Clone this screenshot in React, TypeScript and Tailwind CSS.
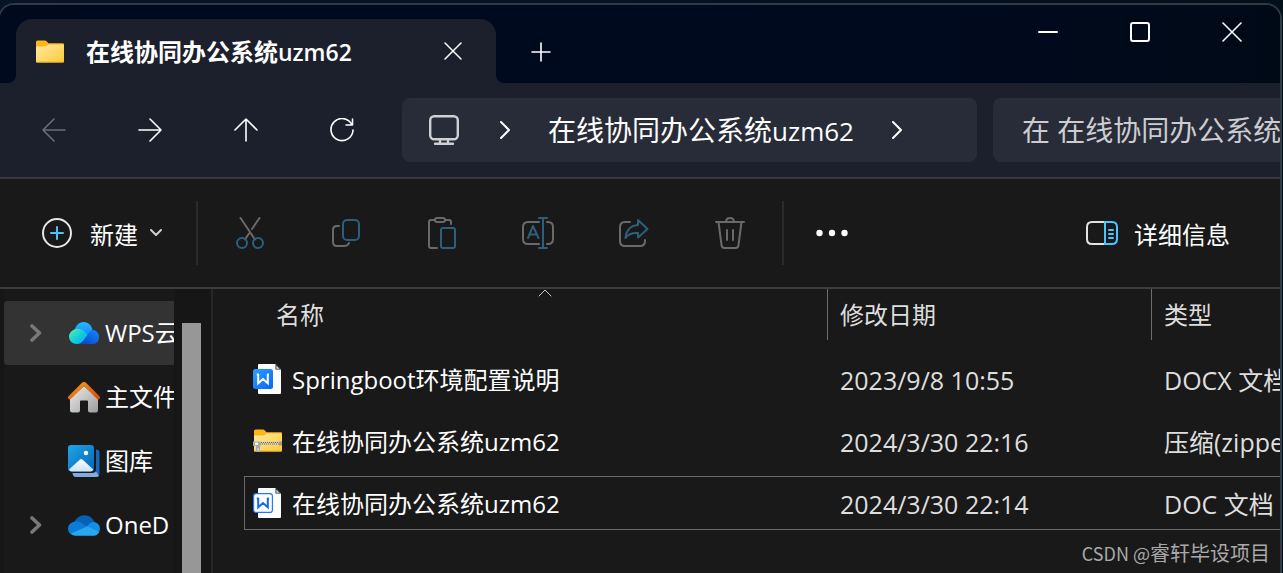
import type { ReactNode } from "react";

type Draw = { d?: string; w: number; h: number; className?: string; children?: ReactNode; sw?: number };

function Icon({ d, w, h, className = "", children, sw = 2 }: Draw) {
  return (
    <svg
      width={w}
      height={h}
      viewBox={`0 0 ${w} ${h}`}
      fill="none"
      stroke="currentColor"
      strokeWidth={sw}
      strokeLinecap="round"
      strokeLinejoin="round"
      aria-hidden="true"
      className={`block shrink-0 ${className}`}
    >
      {d ? <path d={d} /> : children}
    </svg>
  );
}

const GREY = "#6a6a6a";
const TEAL = "#2c5f7c";

function FolderIcon() {
  return (
    <svg width="28" height="23" viewBox="0 0 28 23" className="block shrink-0" aria-hidden="true">
      <defs>
        <linearGradient id="folder" x1="0" y1="0" x2="1" y2="1">
          <stop offset="0" stopColor="#ffe9a2" />
          <stop offset="1" stopColor="#ffc937" />
        </linearGradient>
      </defs>
      <path d="M0 2Q0 .5 1.500 .5H9Q10 .5 10.600 1.200L12.500 3.200H26.500Q28 3.200 28 4.500V12H0Z" fill="#fcb61a" />
      <path d="M0 7.200Q0 6.500 .9 6.500H9.500Q10.300 6.500 11 5.800L12.400 4.500H28V21.500Q28 22.500 27 22.500H1Q0 22.500 0 21.500Z" fill="url(#folder)" />
      <path d="M.5 22.200H27.500" stroke="#e0a020" strokeWidth="1" />
    </svg>
  );
}

function ZipIcon() {
  return (
    <svg width="30" height="24" viewBox="0 0 30 24" className="block shrink-0" aria-hidden="true">
      <path d="M1 2Q1 .5 2.500 .5H10Q11 .5 11.600 1.200L13.500 3.200H28Q29 3.200 29 4.500V12H1Z" fill="#fcb61a" />
      <path d="M1 6.500H10.500Q11.300 6.500 12 5.800L13.400 4.500H29V21.500Q29 22.500 28 22.500H2Q1 22.500 1 21.500Z" fill="url(#folder)" />
      <path d="M1 22.200H28.500" stroke="#e0a020" strokeWidth="1" />
      <rect x="7" y="12.500" width="22" height="3.500" fill="#d8d0b4" />
      <path d="M8 13.500H26" stroke="#6f6653" strokeWidth="1" strokeDasharray="1 1" />
      <path d="M7 15H26" stroke="#6f6653" strokeWidth="1" strokeDasharray="1 1" />
      <rect x="26" y="12.500" width="3" height="4" fill="#9a9a9a" />
      <path d="M0 12.500H7.500V17H7V23H3V17H0Z" fill="#a9a9a9" />
      <path d="M2 13.500H5V16H2ZM4.500 19.500H5.800V21.500H4.500Z" fill="#f1f1f1" />
    </svg>
  );
}

function DocIcon({ filled }: { filled: boolean }) {
  return (
    <svg width="30" height="32" viewBox="0 0 30 32" className="block shrink-0" aria-hidden="true">
      <defs>
        <linearGradient id="wps" x1="0" y1="0" x2="1" y2="1">
          <stop offset="0" stopColor="#2aa2ff" />
          <stop offset="1" stopColor="#0a66f7" />
        </linearGradient>
      </defs>
      <path d="M5 2Q5 1 6 1H22.500L28 6.500V30Q28 31 27 31H6Q5 31 5 30Z" fill="#fdfdff" />
      <path d="M22.500 1V6.500H28Z" fill="#20242c" />
      <path d="M23.400 2.800V5.800H26.500Z" fill="#e9ebf2" />
      {filled ? (
        <rect x="0" y="6" width="20" height="20" rx="2.500" fill="url(#wps)" />
      ) : (
        <rect x=".6" y="6.600" width="18.800" height="18.800" rx="2.500" fill="#fff" stroke="#2277f5" strokeWidth="1.200" />
      )}
      <path
        d="M5.200 11V20.300L10 16L14.800 20.300V11M3.800 11.500H5.800M14.200 11.500H16"
        fill="none"
        stroke={filled ? "#fff" : "#1268ef"}
        strokeWidth="2"
      />
    </svg>
  );
}

function WpsCloudIcon() {
  return (
    <svg width="30" height="22" viewBox="0 0 30 22" className="block" aria-hidden="true">
      <defs>
        <linearGradient id="cloudA" x1="0" y1="0" x2="1" y2="1">
          <stop offset="0" stopColor="#5df0b0" />
          <stop offset=".5" stopColor="#12d0d8" />
          <stop offset="1" stopColor="#0aa0ff" />
        </linearGradient>
        <linearGradient id="cloudB" x1="0" y1="0" x2="0" y2="1">
          <stop offset="0" stopColor="#28b8ff" />
          <stop offset="1" stopColor="#1488ff" />
        </linearGradient>
        <linearGradient id="cloudC" x1="1" y1="0" x2="0" y2="1">
          <stop offset="0" stopColor="#1687ff" />
          <stop offset="1" stopColor="#063fc4" />
        </linearGradient>
      </defs>
      <path d="M5 10C6 4 10 0 14.500 0C19 0 22.500 3 23.500 8L18 14H8Z" fill="url(#cloudB)" />
      <path d="M12 21L20 10.500C22 8 24 7.700 25.500 8.200C28 9 30 11.500 30 15C30 19 27.500 22 24 22H10Z" fill="url(#cloudC)" />
      <path d="M7.500 7C11 6 14.500 8 18.500 13L13.500 19.500Q11.500 22 8 22C3.500 22 0 19 0 14.500C0 11 3 7.500 7.500 7Z" fill="url(#cloudA)" />
    </svg>
  );
}

function HomeIcon() {
  return (
    <svg width="32" height="31" viewBox="0 0 32 31" className="block" aria-hidden="true">
      <defs>
        <linearGradient id="wall" x1="0" y1="0" x2="1" y2="1">
          <stop offset="0" stopColor="#ededed" />
          <stop offset="1" stopColor="#9c9c9c" />
        </linearGradient>
        <linearGradient id="roof" x1="0" y1="0" x2="1" y2="1">
          <stop offset="0" stopColor="#fb9a17" />
          <stop offset="1" stopColor="#d94a08" />
        </linearGradient>
      </defs>
      <path d="M16 4L30 17V28Q30 30.500 28 30.500H22Q20 30.500 20 28.500V19.500Q20 18.500 19 18.500H13Q12 18.500 12 19.500V28.500Q12 30.500 10 30.500H4.500Q2 30.500 2 28V17Z" fill="url(#wall)" />
      <path d="M1.800 15.500L14.500 2.700Q16 1.300 17.500 2.700L30.200 15.500" fill="none" stroke="url(#roof)" strokeWidth="3.600" strokeLinecap="round" />
    </svg>
  );
}

function GalleryIcon() {
  return (
    <svg width="32" height="32" viewBox="0 0 32 32" className="block" aria-hidden="true">
      <defs>
        <linearGradient id="sky" x1="0" y1="0" x2="1" y2="1">
          <stop offset="0" stopColor="#1fa5ea" />
          <stop offset="1" stopColor="#0566b4" />
        </linearGradient>
        <linearGradient id="hill" x1="0" y1="0" x2="0" y2="1">
          <stop offset="0" stopColor="#ffffff" />
          <stop offset="1" stopColor="#c9e4fb" />
        </linearGradient>
      </defs>
      <path d="M28 4.500Q31.500 4.500 31.500 7.500V28Q31.500 32 27.500 32H8Q5 32 4.500 28H24Q28 28 28 24Z" fill="#1668b4" />
      <path d="M4.500 28H24Q27 28 28 26.500L31 31Q29.500 32 27.500 32H8Q5 32 4.500 28Z" fill="#82abdf" />
      <rect x="0" y="0" width="26" height="26.500" rx="3" fill="url(#sky)" />
      <path d="M1 24.500L12 14.600Q13.200 13.600 14.400 14.600L25.300 24.500Q24.500 26.500 22.500 26.500H3.500Q2 26.500 1 24.500Z" fill="url(#hill)" />
      <circle cx="18" cy="8" r="2.200" fill="#fff" />
    </svg>
  );
}

function OneDriveIcon() {
  return (
    <svg width="32" height="21" viewBox="0 0 32 21" className="block" aria-hidden="true">
      <path d="M6 7.500C8 3 12 .2 16.500 .2C21 .2 25 3 26.500 7.200L19 12L10 9Z" fill="#0660b5" />
      <path d="M8.500 6.500C11 6.500 13 7.500 14.500 8.500L20 12L4.500 20C1.500 19 0 16.500 0 13.800C0 9.500 3.500 6.500 8.500 6.500Z" fill="#0a7bd6" />
      <path d="M19 11.500C21 8.500 23.500 7 26 7.100C29.500 7.500 32 10.500 32 13.800Q32 15.500 31 17.500L19 12Z" fill="#128ee4" />
      <path d="M3 18.500L19.500 11.300L31.300 17Q29.500 20.700 25.500 20.700H7.500Q4.700 20.700 3 18.500Z" fill="#28a6ee" />
    </svg>
  );
}

const tools: { label: string; icon: ReactNode }[] = [
  {
    label: "剪切",
    icon: (
      <Icon w={28} h={32}>
        <path d="M4.500 1L19 22.500M23.500 1L16 12M13 16.500L9 22.500" stroke={GREY} />
        <circle cx="6" cy="26" r="5" stroke={TEAL} />
        <circle cx="22" cy="26" r="5" stroke={TEAL} />
      </Icon>
    ),
  },
  {
    label: "复制",
    icon: (
      <Icon w={28} h={28}>
        <path d="M7 7H5Q1 7 1 11V23Q1 27 5 27H12Q16 27 17 24" stroke={GREY} />
        <rect x="11" y="1" width="16" height="20" rx="4" stroke={TEAL} />
      </Icon>
    ),
  },
  {
    label: "粘贴",
    icon: (
      <Icon w={28} h={32}>
        <path d="M7 3H3Q1 3 1 5V29Q1 31 3 31H9M17 3H21Q23 3 23 5V7" stroke={GREY} />
        <rect x="7" y="1" width="10" height="4" rx="2" stroke={GREY} />
        <rect x="13" y="11" width="14" height="20" rx="2" stroke={TEAL} />
      </Icon>
    ),
  },
  {
    label: "重命名",
    icon: (
      <Icon w={32} h={32}>
        <path d="M17 5H6Q1 5 1 10V22Q1 27 6 27H17M25 5H26Q31 5 31 10V22Q31 27 26 27H25" stroke={GREY} />
        <path d="M17 1H25M21 1V31M17 31H25M6 21L11 9L16.500 21M8 17.500H14.500" stroke={TEAL} />
      </Icon>
    ),
  },
  {
    label: "共享",
    icon: (
      <Icon w={30} h={28}>
        <path d="M11 3H6Q1 3 1 8V22Q1 27 6 27H21Q26 27 26 22V21" stroke={GREY} />
        <path d="M19 1L28.500 10L19 18.500V14C13 13.500 9 15.500 6.500 19C7 11.500 11.500 6.500 19 6Z" stroke={TEAL} />
      </Icon>
    ),
  },
  {
    label: "删除",
    icon: (
      <Icon w={30} h={32}>
        <path d="M1 5H29M3.500 5L6.500 28Q7 31 9.500 31H20.500Q23 31 23.500 28L26.500 5M11 4.500Q11.500 1 15 1Q18.500 1 19 4.500M12 13V23M18 13V23" stroke={GREY} />
      </Icon>
    ),
  },
];

const places: { label: string; icon: ReactNode; expandable?: boolean; active?: boolean }[] = [
  { label: "WPS云", icon: <WpsCloudIcon />, expandable: true, active: true },
  { label: "主文件", icon: <HomeIcon /> },
  { label: "图库", icon: <GalleryIcon /> },
  { label: "OneD", icon: <OneDriveIcon />, expandable: true },
];

const files: { name: string; date: string; type: string; icon: ReactNode; focused?: boolean }[] = [
  { name: "Springboot环境配置说明", date: "2023/9/8 10:55", type: "DOCX 文档", icon: <DocIcon filled /> },
  { name: "在线协同办公系统uzm62", date: "2024/3/30 22:16", type: "压缩(zippe", icon: <ZipIcon /> },
  { name: "在线协同办公系统uzm62", date: "2024/3/30 22:14", type: "DOC 文档", icon: <DocIcon filled={false} />, focused: true },
];

function TitleBar() {
  return (
    <header className="flex h-[78px] shrink-0 items-start justify-between bg-linear-to-r from-[#000a1f] from-70% to-[#000a17]">
      <div className="flex self-end">
        <div className="flex w-4 items-end bg-[#1b202c]">
          <div className="h-full w-full rounded-br-lg bg-[#000a1f]" />
        </div>
        <div className="flex h-16 w-[480px] items-center rounded-t-2xl bg-[#1b202c] pl-5">
          <FolderIcon />
          <h1 className="flex-1 pt-[2px] pl-[22px] text-2xl font-bold whitespace-nowrap">
            在线协同办公系统<span className="text-[23px] font-semibold">uzm62</span>
          </h1>
          <button type="button" aria-label="关闭标签页" className="flex h-12 w-[86px] items-center justify-center">
            <Icon w={18} h={18} sw={1.5} d="M1 1L17 17M17 1L1 17" />
          </button>
        </div>
        <div className="flex bg-[#1b202c]">
          <button type="button" aria-label="新标签页" className="flex w-[90px] items-center justify-center rounded-bl-lg bg-[#000a1f] pt-[2px]">
            <Icon w={20} h={20} sw={1.6} d="M10 1V19M1 10H19" />
          </button>
        </div>
      </div>
      <div className="flex h-[54px] pr-[2px]">
        <button type="button" aria-label="最小化" className="flex w-[92px] items-center justify-center">
          <Icon w={20} h={20} d="M1 10H19" />
        </button>
        <button type="button" aria-label="最大化" className="flex w-[92px] items-center justify-center">
          <Icon w={20} h={20}>
            <rect x="1" y="1" width="18" height="18" rx="2" />
          </Icon>
        </button>
        <button type="button" aria-label="关闭" className="flex w-[92px] items-center justify-center">
          <Icon w={20} h={20} sw={1.6} d="M1 1L19 19M19 1L1 19" />
        </button>
      </div>
    </header>
  );
}

function NavBar() {
  const nav = "flex h-16 w-24 shrink-0 items-center justify-center";
  return (
    <nav className="flex h-24 shrink-0 items-center border-b-2 border-[#393739] bg-[#1b202c] pl-[6px]">
      <button type="button" aria-label="后退" disabled className={`${nav} text-[#696d75]`}>
        <Icon w={24} h={24} sw={1.6} d="M23 12H1M12 1L1 12L12 23" />
      </button>
      <button type="button" aria-label="前进" className={nav}>
        <Icon w={24} h={24} sw={1.6} d="M1 12H23M12 1L23 12L12 23" />
      </button>
      <button type="button" aria-label="向上" className={nav}>
        <Icon w={24} h={24} sw={1.6} d="M12 23V1M1 12L12 1L23 12" />
      </button>
      <button type="button" aria-label="刷新" className={nav}>
        <Icon w={24} h={24} sw={1.6} d="M22 7A11 11 0 1 0 23 12M22.500 1V7H16" />
      </button>
      <div className="ml-3 flex h-16 min-w-0 flex-1 items-center rounded-lg bg-[#272c38] pl-[27px]">
        <Icon w={30} h={30} sw={2.4} className="text-[#cfd0d2]">
          <rect x="1.200" y="1.200" width="27.600" height="23" rx="4" />
          <path d="M6 28.800H24M11 24.500V28.500M19 24.500V28.500" />
        </Icon>
        <Icon w={10} h={18} d="M1 1L9 9L1 17" className="ml-[41px]" />
        <a href="#folder" className="ml-[38px] text-[28px] whitespace-nowrap">
          在线协同办公系统<span className="text-[26px]">uzm62</span>
        </a>
        <Icon w={10} h={18} d="M1 1L9 9L1 17" className="ml-[38px]" />
      </div>
      <input
        type="text"
        aria-label="搜索"
        placeholder="在 在线协同办公系统"
        className="ml-4 h-16 w-[287px] shrink-0 rounded-l-lg bg-[#272c38] pl-[29px] text-[28px] outline-none placeholder:text-[#cccdd0]"
      />
    </nav>
  );
}

function Toolbar() {
  return (
    <div role="toolbar" className="flex h-[110px] shrink-0 items-center border-b-2 border-[#3d3d3d] bg-[#191919]">
      <button type="button" className="flex h-16 w-[196px] shrink-0 items-center pl-[42px]">
        <Icon w={30} h={30}>
          <circle cx="15" cy="15" r="14" stroke="#e6e6e6" />
          <path d="M15 9V21M9 15H21" stroke="#4cc2ff" />
        </Icon>
        <span className="ml-[18px] pt-[3px] text-2xl">新建</span>
        <Icon w={12} h={8} d="M1 1L6 6L11 1" className="ml-3 text-[#cfcfcf]" />
      </button>
      <div className="flex h-16 border-x-2 border-[#2b2b2b] px-1">
        {tools.map((t) => (
          <button key={t.label} type="button" aria-label={t.label} disabled className="flex w-24 items-center justify-center">
            {t.icon}
          </button>
        ))}
      </div>
      <button type="button" aria-label="查看更多" className="flex h-16 w-24 items-center justify-center">
        <svg width="32" height="8" viewBox="0 0 32 8" fill="#fff" aria-hidden="true">
          <circle cx="3.500" cy="4" r="3.200" />
          <circle cx="16" cy="4" r="3.200" />
          <circle cx="28.500" cy="4" r="3.200" />
        </svg>
      </button>
      <button type="button" className="ml-auto flex h-16 items-center pr-[50px]">
        <Icon w={32} h={24}>
          <path d="M18 1H6Q1 1 1 6V18Q1 23 6 23H18" stroke="#e2e2e2" />
          <path d="M19 1H26Q31 1 31 6V18Q31 23 26 23H19ZM23 9H27M23 13H27M23 17H27" stroke="#4cc2ff" />
        </Icon>
        <span className="ml-4 pt-[3px] text-2xl">详细信息</span>
      </button>
    </div>
  );
}

function Sidebar() {
  return (
    <aside className="flex w-[213px] shrink-0 border-r-2 border-[#262626] bg-[#161616] pl-1">
      <ul className="w-[170px] overflow-hidden bg-[#191919] pt-3">
        {places.map((p) => (
          <li key={p.label}>
            <a
              href="#place"
              className={
                p.active
                  ? "flex h-16 items-center rounded-l-sm bg-[#333333] pl-[26px]"
                  : "flex h-16 items-center pl-[26px]"
              }
            >
              <span className="w-[38px] shrink-0 text-[#797979]">
                {p.expandable && <Icon w={12} h={18} sw={3.6} d="M2 2L9.500 9L2 16" />}
              </span>
              <span className="flex w-8 shrink-0 justify-center">{p.icon}</span>
              <span className="ml-[5px] text-2xl whitespace-nowrap">{p.label}</span>
            </a>
          </li>
        ))}
      </ul>
      <div className="ml-2 flex w-[19px] flex-col pt-[34px]">
        <div className="flex-1 bg-[#979797]" />
      </div>
    </aside>
  );
}

function FileList() {
  return (
    <main className="min-w-0 flex-1 overflow-hidden bg-[#191919] pl-[31px]">
      <table className="-mt-2 w-full table-fixed border-separate border-spacing-x-0 border-spacing-y-2 text-left text-2xl whitespace-nowrap">
        <colgroup>
          <col className="w-[583px]" />
          <col className="w-[324px]" />
          <col />
        </colgroup>
        <thead className="text-[#dedede]">
          <tr className="h-[55px] align-top">
            <th scope="col" className="relative p-0 font-normal">
              <div className="flex h-[51px] items-center pl-8">名称</div>
              <Icon w={14} h={8} sw={1} d="M1 7L7 1L13 7" className="absolute top-0 left-[294px] text-[#c8c8c8]" />
            </th>
            <th scope="col" className="p-0 font-normal">
              <div className="flex h-[51px] items-center border-l border-[#6c6c6c] pl-3">修改日期</div>
            </th>
            <th scope="col" className="p-0 font-normal">
              <div className="flex h-[51px] items-center border-l border-[#6c6c6c] pl-3">类型</div>
            </th>
          </tr>
        </thead>
        <tbody>
          {files.map((f) => {
            const line = f.focused ? "border-y border-[#6a6a6a]" : "border-y border-transparent";
            return (
              <tr key={f.date} className="h-[54px]">
                <td className={`${line} border-l py-0 pr-0 pl-2`}>
                  <div className="flex items-center">
                    <span className="w-[39px] shrink-0">{f.icon}</span>
                    <span className="pt-[2px]">{f.name}</span>
                  </div>
                </td>
                <td className={`${line} pt-[2px] pr-0 pb-0 pl-[13px] text-[25px] leading-8 text-[#dedede]`}>{f.date}</td>
                <td className={`${line} overflow-hidden pt-[2px] pr-0 pb-0 pl-[13px] text-[25px] leading-8 text-[#dedede]`}>
                  {f.type}
                </td>
              </tr>
            );
          })}
        </tbody>
      </table>
    </main>
  );
}

export default function App() {
  return (
    <div className="relative flex h-screen min-h-[573px] flex-col overflow-hidden bg-linear-to-r from-[#061429] to-[#02101a] pt-[3px] pr-px font-['Open_Sans','Noto_Sans_CJK_SC',sans-serif] text-white">
      <div className="-ml-[2px] flex min-h-0 flex-1 flex-col overflow-hidden rounded-t-2xl border-2 border-b-0 border-[#333a45]">
        <TitleBar />
        <NavBar />
        <Toolbar />
        <div className="flex min-h-0 flex-1">
          <Sidebar />
          <FileList />
        </div>
      </div>
      <p className="absolute right-[13px] bottom-[6px] font-['Noto_Sans_CJK_SC',sans-serif] text-xl text-[#a9a9a9]">
        <span className="text-lg">CSDN @</span>睿轩毕设项目
      </p>
    </div>
  );
}
